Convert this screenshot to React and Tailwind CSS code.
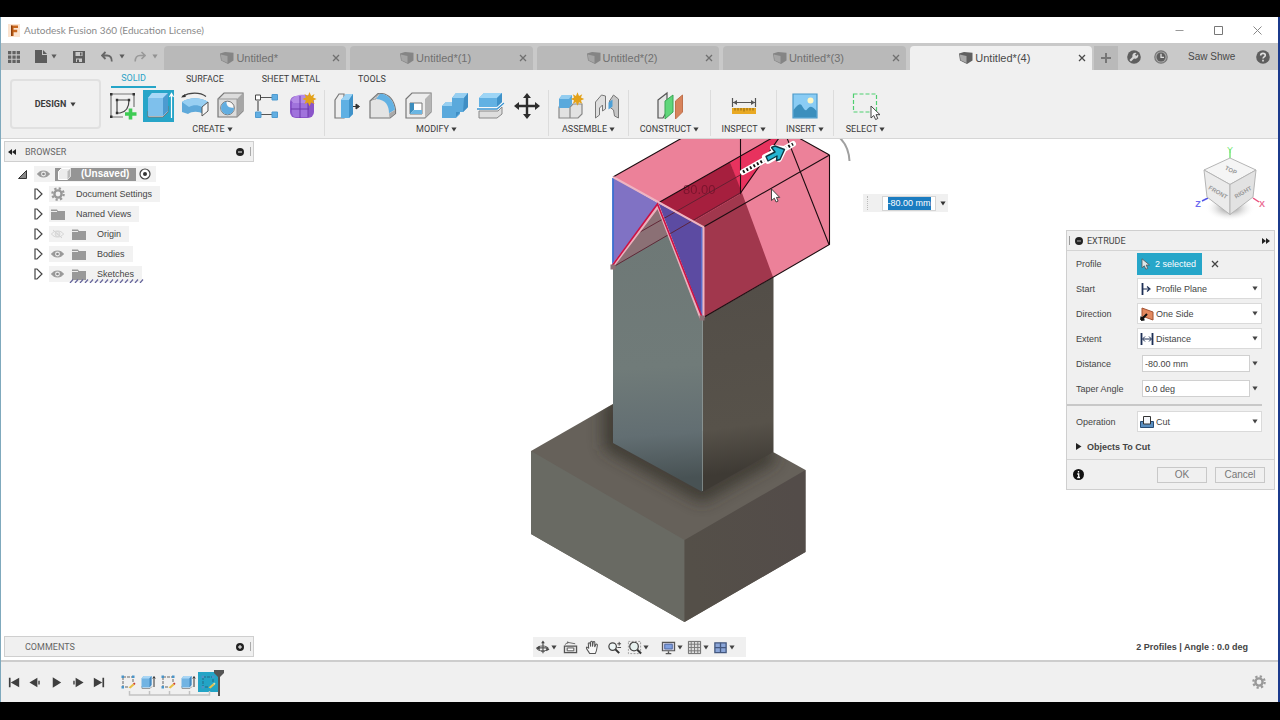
import { useState } from "react";

const TABS = ["Untitled*", "Untitled*(1)", "Untitled*(2)", "Untitled*(3)", "Untitled*(4)"];

function Caret({ className = "" }) {
    return (
        <svg className={`w-[6px] h-[5px] shrink-0 ${className}`} viewBox="0 0 6 5" fill="currentColor">
            <path d="M0.400 0.500h5.200L3 4.600z" />
        </svg>
    );
}

function Icon({ size = "w-4 h-4", box = "0 0 16 16", children }) {
    return (
        <svg className={`${size} shrink-0`} viewBox={box} fill="none">
            {children}
        </svg>
    );
}

function CloseX({ className = "w-[8px] h-[8px]" }) {
    return (
        <svg className={className} viewBox="0 0 8 8" stroke="currentColor" strokeWidth="1.3">
            <path d="M1 1l6 6M7 1L1 7" />
        </svg>
    );
}

/* ---------- title bar ---------- */

function TitleBar() {
    return (
        <header className="flex h-[26px] shrink-0 items-center bg-white pl-[7px] text-[#8a8a8a]">
            <Icon size="w-[12px] h-[13px]" box="0 0 12 13">
                <path d="M0 0h12v13H0z" fill="#fbe3cf" />
                <path d="M3 1.5h7v2.6H5.6v1.6h3.6v2.5H5.6V12H3z" fill="#c8661c" />
                <path d="M3 1.5h1.4V12H3z" fill="#8a3d0c" />
            </Icon>
            <h1 className="ml-[4px] flex-1 text-[10px] font-['Lato','Open_Sans',sans-serif]">Autodesk Fusion 360 (Education License)</h1>
            <div className="flex items-center pr-[1px]">
                <button aria-label="Minimize" className="flex w-[39px] justify-center">
                    <Icon size="w-[9px] h-[9px]" box="0 0 9 9"><path d="M0.500 4.500h8" stroke="#999" /></Icon>
                </button>
                <button aria-label="Maximize" className="flex w-[39px] justify-center">
                    <Icon size="w-[9px] h-[9px]" box="0 0 9 9"><path d="M0.500 0.500h8v8h-8z" stroke="#777" /></Icon>
                </button>
                <button aria-label="Close" className="flex w-[39px] justify-center">
                    <Icon size="w-[9px] h-[9px]" box="0 0 9 9"><path d="M0.500 0.500l8 8M8.500 0.500l-8 8" stroke="#888" /></Icon>
                </button>
            </div>
        </header>
    );
}

/* ---------- document tabs ---------- */

function CubeMark({ active }) {
    return (
        <Icon size="w-[14px] h-[12px]" box="0 0 14 12">
            <path d="M0 1.500L5 0l8.500 0.800V8.500L8 12 1 8.500z" fill={active ? "#606060" : "#858585"} />
            <path d="M0.800 2.500L7.500 4V11L1.600 8.200z" fill={active ? "#a9a9a9" : "#a5a5a5"} />
        </Icon>
    );
}

function TabBar({ active, onSelect }) {
    return (
        <div className="flex h-[27px] shrink-0 bg-[#c9c9c9] text-[#5c5c5c]">
            <div className="flex w-[163px] shrink-0 items-center pl-[7px]">
                <button aria-label="Data panel">
                    <Icon size="w-[12px] h-[12px]" box="0 0 12 12">
                        <path d="M0 0h3.300v3.300H0zM4.400 0h3.300v3.300H4.400zM8.700 0H12v3.300H8.700zM0 4.400h3.300v3.300H0zM4.400 4.400h3.300v3.300H4.400zM8.700 4.400H12v3.300H8.700zM0 8.700h3.300V12H0zM4.400 8.700h3.300V12H4.400zM8.700 8.700H12V12H8.700z" fill="#626262" />
                    </Icon>
                </button>
                <button aria-label="File" className="ml-[15px] flex items-center">
                    <Icon size="w-[12px] h-[13px]" box="0 0 12 13">
                        <path d="M0 0h7v5h5v8H0z" fill="#5c5c5c" />
                        <path d="M8 0l4 4H8z" fill="#5c5c5c" />
                    </Icon>
                    <Caret className="ml-[4px]" />
                </button>
                <button aria-label="Save" className="ml-[16px]">
                    <Icon size="w-[12px] h-[12px]" box="0 0 12 12">
                        <path d="M0 0h12v12H0z" fill="#5c5c5c" />
                        <path d="M2.500 1h7v4h-7zM3 7.500h6V11H3z" fill="#c9c9c9" />
                        <path d="M7 1.500h1.500v3H7zM4 8.500h2V11H4z" fill="#5c5c5c" />
                    </Icon>
                </button>
                <button aria-label="Undo" className="ml-[16px] flex items-center">
                    <Icon size="w-[12px] h-[11px]" box="0 0 12 11">
                        <path d="M4.500 1L1 4.500 4.500 8M1 4.500h5c3 0 4.800 2 4.800 6" stroke="#666" strokeWidth="1.800" />
                    </Icon>
                    <Caret className="ml-[6px]" />
                </button>
                <button aria-label="Redo" className="ml-[9px] flex items-center text-[#929292]">
                    <Icon size="w-[12px] h-[11px]" box="0 0 12 11">
                        <path d="M7.500 1L11 4.500 7.500 8M11 4.500H6c-3 0-4.800 2-4.800 6" stroke="#999" strokeWidth="1.600" />
                    </Icon>
                    <Caret className="ml-[6px]" />
                </button>
            </div>
            <div className="flex min-w-0 flex-1 gap-1 pt-[3px]">
                {TABS.map((name, i) => (
                    <div
                        key={name}
                        className={`flex flex-1 items-center rounded-t-sm ${i === active ? "bg-[#f0f0f0] text-[#4a4a4a]" : "bg-[#b9b9b9] text-[#707070]"}`}
                    >
                        <button className="flex flex-1 items-center justify-center gap-[2px] pl-1 text-[11px]" onClick={() => onSelect(i)}>
                            <CubeMark active={i === active} />
                            {name}
                        </button>
                        <button aria-label={`Close ${name}`} className="mr-[4px] flex w-[12px] justify-center">
                            <CloseX />
                        </button>
                    </div>
                ))}
            </div>
            <div className="flex w-[186px] shrink-0 items-center">
                <button aria-label="New design" className="mt-[3px] ml-[2px] flex h-[24px] w-[24px] items-center justify-center bg-[#b9b9b9]">
                    <Icon size="w-[12px] h-[12px]" box="0 0 12 12"><path d="M6 1v10M1 6h10" stroke="#777" strokeWidth="2" /></Icon>
                </button>
                <button aria-label="Extensions" className="ml-[9px]">
                    <Icon size="w-[14px] h-[14px]" box="0 0 14 14">
                        <circle cx="7" cy="7" r="6.800" fill="#5e5e5e" />
                        <path d="M3.200 10.800L7.500 6.500" stroke="#d5d5d5" strokeWidth="2.200" />
                        <path d="M11 4.300L9.300 6 8 4.700 9.700 3A3 3 0 1 0 11 4.300z" fill="#d5d5d5" />
                    </Icon>
                </button>
                <button aria-label="Job status" className="ml-[13px]">
                    <Icon size="w-[14px] h-[14px]" box="0 0 14 14">
                        <circle cx="7" cy="7" r="6.200" fill="#aaa" stroke="#777" strokeWidth="1.200" />
                        <circle cx="7" cy="7" r="4.500" fill="#5e5e5e" />
                        <path d="M7 3.800V7.300h3" stroke="#ddd" strokeWidth="1.300" />
                    </Icon>
                </button>
                <button className="ml-[20px] text-[10px] text-[#4a4a4a]">Saw Shwe</button>
                <button aria-label="Help" className="ml-auto mr-[8px]">
                    <Icon size="w-[14px] h-[14px]" box="0 0 14 14">
                        <circle cx="7" cy="7" r="6.800" fill="#5e5e5e" />
                        <path d="M4.700 5.400C4.700 2.600 9.300 2.700 9.300 5.300 9.300 6.900 7 6.900 7 8.600M7 9.700v1.800" stroke="#e0e0e0" strokeWidth="1.600" />
                    </Icon>
                </button>
            </div>
        </div>
    );
}

/* ---------- toolbar icons, all on a 30px board ---------- */

const Star = () => (
    <path d="M0-7.500L1.700-3.200 5.300-5.300 3.800-1.600 7.500 0 3.800 1.700 5.300 5.300 1.700 3.600 0 7.500-1.700 3.600-5.300 5.300-3.800 1.700-7.500 0-3.800-1.600-5.300-5.300-1.700-3.200z" fill="#e3a21a" />
);

const ART = {
    "Create Sketch": (
        <>
            <path d="M3 3h23v13M3 3v23h12" stroke="#777" strokeWidth="1.200" />
            <path d="M9 9v13h3c6-1 9-5 9-13zM9 9h12" stroke="#444" strokeWidth="1.200" />
            <path d="M2 2h2.500v2.500H2zM24.500 2H27v2.500h-2.500zM2 24.500h2.500V27H2zM7.800 7.800h2.400v2.400H7.800zM19.800 7.800h2.400v2.400h-2.400zM7.800 20.800h2.400v2.400H7.800z" fill="#333" />
            <path d="M22.500 17.500v11M17 23h11.500" stroke="#3ecb54" strokeWidth="3.600" />
        </>
    ),
    Extrude: (
        <>
            <path d="M4 20v6h15l5-5v-6z" fill="#f2f2f2" stroke="#777" />
            <path d="M4 7l4-5h16v18l-5 5H4z" fill="#7ec0ec" />
            <path d="M4 7l4-5h16l-5 5z" fill="#a8d8f7" />
            <path d="M19 7l5-5v18l-5 5z" fill="#4c9bd0" />
            <path d="M27.500 27V3M25.500 6l2-3.500 2 3.500" stroke="#fff" strokeWidth="1.200" />
        </>
    ),
    Revolve: (
        <>
            <path d="M2 5.500C10 1 20 1 26 5.500" stroke="#444" strokeWidth="1.200" />
            <path d="M1 6.500l4-3.500.8 3z" fill="#333" />
            <path d="M2 11C9 6 21 6 28 11l-5 12c-4-3-11-3-15 0L2 21z" fill="#5fa9da" />
            <path d="M2 11C9 6 21 6 28 11l-6 5c-4-2.500-9-2.500-13 0z" fill="#98cff2" />
            <path d="M22 16l6-5v9l-6 5z" fill="#f6f6f6" stroke="#555" />
        </>
    ),
    Hole: (
        <>
            <path d="M2 8l6-6h19v18l-6 6H2z" fill="#dcdcdc" stroke="#777" strokeWidth="1.200" />
            <path d="M21 8l6-6v18l-6 6z" fill="#a6a6a6" />
            <path d="M2 8h19v18" stroke="#999" />
            <circle cx="11.500" cy="17" r="6.800" fill="#f8f8f8" stroke="#777" />
            <path d="M10.500 10.500a6.500 6.500 0 1 0 7.500 6c-5 1-8-2-7.500-6z" fill="#61ade0" />
        </>
    ),
    Pattern: (
        <>
            <path d="M9 6.500h11M6 10v10M9 23.500h11" stroke="#555" strokeWidth="1.200" />
            <path d="M3.500 4h5v5h-5z" fill="#fff" stroke="#444" />
            <path d="M20 3.500h5.500V9H20zM3.500 21H9v5.500H3.500zM20 21h5.500v5.500H20z" fill="#62aee2" stroke="#4f9bd0" />
        </>
    ),
    "Create Form": (
        <>
            <rect x="2" y="5" width="24" height="22" rx="6" fill="#8a55c9" />
            <path d="M3 9c3-5 9-6 16-5 4 0 6 2 6 5l-4 3H5z" fill="#b48be6" />
            <path d="M4 12h16v14H7c-2 0-3-3-3-5z" fill="#a073dc" />
            <path d="M12 5v22M3 18h18M20 11v15" stroke="#6c3bab" />
            <g transform="translate(21.500 8) scale(.95)"><Star /></g>
        </>
    ),
    "Press Pull": (
        <>
            <path d="M3 9l4-6h5v24H3z" fill="#eee" stroke="#777" strokeWidth="1.200" />
            <path d="M9 9l5-6h7v20l-4 4H9z" fill="#5fb0e3" />
            <path d="M9 9l5-6h7l-4 6z" fill="#9ad2f4" />
            <path d="M17 9l4-6v20l-4 4z" fill="#3f92c9" />
            <path d="M21 15.500h4M24 13l3.500 2.500L24 18z" stroke="#333" fill="#333" />
        </>
    ),
    Fillet: (
        <>
            <path d="M2 10l8-7.500h4c7 1 12 7 13.500 16v4L22 27H2z" fill="#e4e4e4" stroke="#777" strokeWidth="1.200" />
            <path d="M12 2.800c8 0 14 7 15 16l-6 3.500C21 15 18 8.500 8 8z" fill="#62b1e3" />
            <path d="M12 2.800C8.500 5 8 6 8 8c-3 0-4 1-5.500 2" stroke="#999" />
            <path d="M21 22.500l6-3.500v3.500L21.500 27z" fill="#aaa" />
        </>
    ),
    Shell: (
        <>
            <path d="M2 8l6-6h19v19l-6 6H2z" fill="#ededed" stroke="#777" strokeWidth="1.200" />
            <path d="M21 8l6-6v19l-6 6z" fill="#b5b5b5" />
            <path d="M6 12h12v11H6z" fill="#fff" stroke="#777" />
            <path d="M6 12h4v7l-4 4z" fill="#3c8dbd" />
            <path d="M6 23l4-4h8v4z" fill="#6bb6e3" />
        </>
    ),
    Combine: (
        <>
            <path d="M2 15l4-4h6V7l4-5h12v14l-5 5h-3v2l-4 4H2z" fill="#5aa9dc" />
            <path d="M12 7l4-5h12l-4 5zM2 15l4-4h6v4z" fill="#97cff1" />
            <path d="M24 7l4-5v14l-5 5zM16 21h4l-4 5z" fill="#3f8ec4" />
        </>
    ),
    Split: (
        <>
            <path d="M3 7l5-5h18v9l-5 5H3z" fill="#62b1e3" />
            <path d="M3 7l5-5h18l-5 5z" fill="#9dd5f6" />
            <path d="M21 7l5-5v9l-5 5z" fill="#3f92c9" />
            <path d="M3 20h19l4-4v7l-5 4H3z" fill="#dedede" stroke="#888" />
            <path d="M1 17.800h20l7-6" stroke="#fff" strokeWidth="2.600" />
            <path d="M1 18h20l7-6" stroke="#3a93cf" strokeWidth="1.300" />
        </>
    ),
    Move: (
        <path d="M15 2l4 5h-2.800v6.800H23V11l5 4-5 4v-2.800h-6.800V23H19l-4 5-4-5h2.800v-6.800H7V19l-5-4 5-4v2.800h6.800V7H11z" fill="#2d2d2d" />
    ),
    "New Component": (
        <>
            <path d="M3 16h11v11H3zM14 16l3-3h9v10l-4 4h-8z" fill="#e2e2e2" stroke="#888" strokeWidth="1.200" />
            <path d="M3 8l3-4h10v9l-3 4H3z" fill="#5aa9dc" />
            <path d="M3 8l3-4h10l-3 4z" fill="#93cdf0" />
            <g transform="translate(21.500 8) scale(.9)"><Star /></g>
        </>
    ),
    Joint: (
        <>
            <path d="M3.500 11l6-7 4 1v13l-3 2v-6l-3 3v7l-4 3z" fill="#dedede" stroke="#777" />
            <path d="M26.500 8l-5-4-4 6v6l4 3 1 6 4 2z" fill="#c6c6c6" stroke="#777" />
            <path d="M16.500 11.500l4-3v7l-4 3z" fill="#4d9fd6" />
        </>
    ),
    "Offset Plane": (
        <>
            <path d="M3 9l9-7v18L8 27H3z" fill="#e6e6e6" stroke="#555" strokeWidth="1.200" />
            <path d="M10 10l8-6v17l-8 7z" fill="#5fd67a" stroke="#3aa655" />
            <path d="M20.500 10l7-6v17l-7 7z" fill="#d8835b" stroke="#c0714c" />
        </>
    ),
    Measure: (
        <>
            <path d="M3.500 7v9M26.500 7v9M4 11.500h22" stroke="#555" strokeWidth="1.200" />
            <path d="M4 11.500l4-2.500v5zM26 11.500l-4-2.500v5z" fill="#555" />
            <path d="M3 17h24v6H3z" fill="#e9a923" />
            <path d="M6 17v2.500M9 17v2.500M12 17v2.500M15 17v3.500M18 17v2.500M21 17v2.500M24 17v2.500" stroke="#8b6410" />
        </>
    ),
    "Insert Image": (
        <>
            <path d="M3 3h24v24H3z" fill="#8accf4" stroke="#4b99c9" strokeWidth="1.200" />
            <path d="M3.500 19c4-5 6-7 8-5 2 3 3 6 5 5 3-4 5-5 10 1v6.500h-23z" fill="#3c8fbd" />
            <circle cx="20.500" cy="9.500" r="3" fill="#fff7c4" />
        </>
    ),
    Select: (
        <>
            <path d="M2.500 3h23v18h-23z" stroke="#4fcf70" strokeWidth="1.200" strokeDasharray="4 2" />
            <path d="M20 15v12l2.800-2.500 1.800 4 2.200-1-1.800-3.800H29z" fill="#fff" stroke="#444" />
        </>
    ),
};

const GROUPS = [
    { label: "CREATE", width: "w-[224px]", tools: ["Create Sketch", "Extrude", "Revolve", "Hole", "Pattern", "Create Form"] },
    { label: "MODIFY", width: "w-[224px]", tools: ["Press Pull", "Fillet", "Shell", "Combine", "Split", "Move"] },
    { label: "ASSEMBLE", width: "w-[80px]", tools: ["New Component", "Joint"] },
    { label: "CONSTRUCT", width: "w-[82px]", tools: ["Offset Plane"] },
    { label: "INSPECT", width: "w-[66px]", tools: ["Measure"] },
    { label: "INSERT", width: "w-[57px]", tools: ["Insert Image"] },
    { label: "SELECT", width: "w-[64px] border-transparent", tools: ["Select"] },
];

function Toolbar() {
    return (
        <div className="flex h-[69px] shrink-0 border-b border-[#d6d6d6] bg-[#f0f0f0] font-[Roboto,sans-serif] text-[9px] leading-[14px] text-[#3c3c3c]">
            <button className="mt-[9px] ml-[9px] flex h-[50px] w-[91px] items-center justify-center gap-[4px] rounded-sm border-2 border-[#e0e0e0] font-bold">
                DESIGN <Caret />
            </button>
            <div className="flex flex-col">
                <nav className="flex h-[18px] items-stretch leading-[16px]">
                    <button className="mr-[30px] ml-[10px] w-[45px] border-b-2 border-[#25a5c8] text-[#2aa3c6]">SOLID</button>
                    <button className="mr-[38px]">SURFACE</button>
                    <button className="mr-[38px]">SHEET METAL</button>
                    <button>TOOLS</button>
                </nav>
                <div className="flex pt-[2px]">
                    {GROUPS.map((g) => (
                        <section key={g.label} className={`flex flex-col items-center border-r border-[#dcdcdc] ${g.width}`}>
                            <div className="flex">
                                {g.tools.map((t) => (
                                    <button key={t} aria-label={t} className="flex h-[32px] w-[36px] items-center justify-center">
                                        <span className={`flex h-[32px] w-[31px] items-center justify-center ${t === "Extrude" ? "bg-[#27a5c8]" : ""}`}>
                                            <Icon size="w-[30px] h-[30px]" box="0 0 30 30">{ART[t]}</Icon>
                                        </span>
                                    </button>
                                ))}
                            </div>
                            <button className="flex h-[14px] items-center gap-[2px]">{g.label}<Caret /></button>
                        </section>
                    ))}
                </div>
            </div>
        </div>
    );
}

/* ---------- browser tree ---------- */

function Eye({ off }) {
    return (
        <Icon size="w-[13px] h-[10px]" box="0 0 13 10">
            <path d="M0.500 5C3 1 10 1 12.500 5 10 9 3 9 0.500 5z" fill={off ? "none" : "#999"} stroke={off ? "#d3d3d3" : "#999"} />
            <circle cx="6.500" cy="5" r="2.400" fill={off ? "none" : "#f0f0f0"} stroke={off ? "#d3d3d3" : "none"} />
            <circle cx="6.500" cy="5" r="1.300" fill={off ? "#ddd" : "#888"} />
            {off && <path d="M2 1l9 8" stroke="#d3d3d3" />}
        </Icon>
    );
}

function Folder() {
    return (
        <Icon size="w-[14px] h-[11px]" box="0 0 14 11">
            <path d="M0 0.500h6l1 1.500h7v9H0z" fill="#999" />
            <path d="M0 2.500h6" stroke="#eee" />
        </Icon>
    );
}

function Gear({ size = "w-[14px] h-[14px]" }) {
    return (
        <Icon size={size} box="0 0 14 14">
            <circle cx="7" cy="7" r="3.600" stroke="#999" strokeWidth="2.400" />
            <circle cx="7" cy="7" r="5.700" stroke="#999" strokeWidth="2.200" strokeDasharray="2.240 2.240" />
        </Icon>
    );
}

function PanelHeader({ title, collapse, plus }) {
    return (
        <div className="flex h-[21px] items-center border border-[#cfcfcf] bg-[#f0f0f0] font-[Roboto,sans-serif] text-[9px] leading-[14px] text-[#666]">
            <span className="flex w-[20px] pl-[3px]">
                {collapse && <Icon size="w-[8px] h-[6px]" box="0 0 8 6"><path d="M4 0v6L0 3zM8 0v6L4 3z" fill="#222" /></Icon>}
            </span>
            <h2 className="flex-1">{title}</h2>
            <button aria-label={`Toggle ${title}`}>
                <Icon size="w-[8px] h-[8px]" box="0 0 8 8">
                    <circle cx="4" cy="4" r="4" fill="#222" />
                    <path d={plus ? "M2 4h4M4 2v4" : "M2 4h4"} stroke="#fff" />
                </Icon>
            </button>
            <span className="ml-[6px] h-[9px] w-[3px] border-l border-[#aaa]" />
        </div>
    );
}

const NODES = [
    { name: "Document Settings", icon: "gear" },
    { name: "Named Views", icon: "folder" },
    { name: "Origin", icon: "folder", eye: "off" },
    { name: "Bodies", icon: "folder", eye: "on" },
    { name: "Sketches", icon: "folder", eye: "on", hatched: true },
];

function Browser() {
    return (
        <section>
            <PanelHeader title="BROWSER" collapse />
            <ul className="pt-[2px] text-[9px] leading-[14px] text-[#444]">
                <li className="flex h-[20px] items-center pl-[14px]">
                    <Icon size="w-[9px] h-[9px]" box="0 0 9 9"><path d="M8.500 0.500v8h-8z" fill="#888" stroke="#333" /></Icon>
                    <div className="ml-[7px] flex h-[16px] items-center bg-[#f2f2f2] pr-[5px] pl-[3px]">
                        <Eye />
                        <span className="mr-[3px] ml-[5px] flex h-[13px] w-[81px] items-center bg-[#959595] pl-[3px] text-[10px] font-bold text-white">
                            <Icon size="w-[13px] h-[12px]" box="0 0 13 12">
                                <path d="M0.500 3.500l3-3h9v8l-3 3h-9z" fill="#ececec" stroke="#fff" />
                                <path d="M9.500 3.500l3-3v8l-3 3z" fill="#bbb" />
                            </Icon>
                            <span className="ml-[10px]">(Unsaved)</span>
                        </span>
                        <Icon size="w-[12px] h-[12px]" box="0 0 12 12">
                            <circle cx="6" cy="6" r="5" fill="#fff" stroke="#444" strokeWidth="1.200" />
                            <circle cx="6" cy="6" r="2" fill="#333" />
                        </Icon>
                    </div>
                </li>
                {NODES.map((n) => (
                    <li key={n.name} className="flex h-[20px] items-center pl-[30px]">
                        <Icon size="w-[9px] h-[12px]" box="0 0 9 12"><path d="M1 1h2l5 5-5 5H1z" fill="#fff" stroke="#444" strokeWidth="1.200" /></Icon>
                        <div className="relative ml-[6px] flex h-[16px] items-center bg-[#f2f2f2] pr-[8px] pl-[2px]">
                            {n.eye && <span className="mr-[8px] flex"><Eye off={n.eye === "off"} /></span>}
                            <span className="flex w-[14px] justify-center">{n.icon === "gear" ? <Gear /> : <Folder />}</span>
                            <span className="ml-[11px]">{n.name}</span>
                            {n.hatched && (
                                <svg className="absolute bottom-[-1px] left-[20px] h-[4px] w-[75px]" viewBox="0 0 75 4">
                                    <path d="M1 4l3-3.500M6 4l3-3.500M11 4l3-3.500M16 4l3-3.500M21 4l3-3.500M26 4l3-3.500M31 4l3-3.500M36 4l3-3.500M41 4l3-3.500M46 4l3-3.500M51 4l3-3.500M56 4l3-3.500M61 4l3-3.500M66 4l3-3.500M71 4l3-3.500" stroke="#66669c" strokeWidth="1.200" />
                                </svg>
                            )}
                        </div>
                    </li>
                ))}
            </ul>
        </section>
    );
}

/* ---------- model ---------- */

function Model() {
    return (
        <svg className="absolute inset-0 h-full w-full" viewBox="1 139 1277 521" fill="none">
            <defs>
                <linearGradient id="colLeft" x1="640" y1="230" x2="656" y2="480" gradientUnits="userSpaceOnUse">
                    <stop offset="0" stopColor="#6e7876" />
                    <stop offset=".55" stopColor="#707b79" />
                    <stop offset=".82" stopColor="#626e72" />
                    <stop offset="1" stopColor="#485254" />
                </linearGradient>
                <linearGradient id="colRight" x1="728" y1="290" x2="752" y2="470" gradientUnits="userSpaceOnUse">
                    <stop offset="0" stopColor="#534e48" />
                    <stop offset=".75" stopColor="#57524a" />
                    <stop offset="1" stopColor="#3e3a34" />
                </linearGradient>
                <linearGradient id="baseRight" x1="690" y1="560" x2="805" y2="540" gradientUnits="userSpaceOnUse">
                    <stop offset="0" stopColor="#544f48" />
                    <stop offset="1" stopColor="#534c49" />
                </linearGradient>
                <clipPath id="plinthTop">
                    <path d="M531 451L613 404 773 452 805.500 470 684.500 540z" />
                </clipPath>
                <filter id="soft" x="-30%" y="-30%" width="160%" height="160%">
                    <feGaussianBlur stdDeviation="8" />
                </filter>
            </defs>

            {/* plinth */}
            <path d="M531 451L613 404 773 452 805.500 470V552L684.500 622 531 534z" fill="#66615a" />
            <g clipPath="url(#plinthTop)">
                <path d="M613 398V443L702 492 773 452" stroke="#35312b" strokeWidth="18" opacity=".85" filter="url(#soft)" />
            </g>
            <path d="M531 451L684.500 540V622L531 534z" fill="#696a63" />
            <path d="M684.500 540L805.500 470V552L684.500 622z" fill="url(#baseRight)" />

            {/* column */}
            <path d="M613 267L658 205 702.500 318V492L613 443z" fill="url(#colLeft)" />
            <path d="M702.500 318L773.500 277V452L702.500 492z" fill="url(#colRight)" />
            <path d="M702.500 318V491" stroke="#8a9696" strokeWidth=".8" />

            {/* cut volume */}
            <path d="M613 177L682 138H799L829.500 155V244.500L702.500 318 703.500 227z" fill="#ec8199" />
            <path d="M730 162L772 138H779L741 193z" fill="#e8325e" />
            <path d="M658 203L730 162 742 193 694 221z" fill="#a61f3e" />
            <path d="M694 221L742 193 773 277 702.500 318 703.500 227z" fill="#a1374d" />
            <path d="M658 205L613 267 669 234z" fill="#8b7075" />
            <path d="M613 177L658 203 613 267z" fill="#8072c4" />
            <path d="M658 203L703.500 227 702.500 318z" fill="#5c4ba2" />
            <text x="683" y="194" fontSize="13" fill="#6d1028" opacity=".75">80.00</text>

            <g stroke="#1c0c10" strokeWidth="1.100">
                <path d="M613 177L682 138M658 203L772 138M703.500 227L829.500 155M829.500 155V244.500L702.500 318M799 138L829.500 155M740.500 138V193L779 138M787 138L829 244.500" />
                <path d="M613 267L740 193M640 232L742 174" stroke="#5c1f30" strokeWidth=".9" />
            </g>
            <path d="M613 178V266" stroke="#3a6fd0" strokeWidth="1.800" />
            <path d="M702 228V317" stroke="#5a78d8" strokeWidth="1.500" />
            <path d="M613 177L703.500 227V318" stroke="#eeb4c2" strokeWidth="2" />
            <path d="M612 267L658 206 701 318" stroke="#eab0bc" strokeWidth="3" />
            <path d="M612 266L657.500 204 702 317" stroke="#cc1145" strokeWidth="1.600" />
            <path d="M610.500 264.500h5v5h-5zM699.500 315.500h5v5h-5z" fill="#8c7076" />

            {/* drag handle */}
            <path d="M743 172L793 144" stroke="#fff" strokeWidth="6" strokeLinecap="round" />
            <path d="M743 172L793 144" stroke="#111" strokeWidth="3" strokeDasharray="1.800 2.200" />
            <path d="M765 157L775 152 773 148 784 149 779 159 777 156 768 161z" stroke="#fff" strokeWidth="6" strokeLinejoin="round" />
            <path d="M766 156.500L775 152 771.500 147.500 775 146 784.500 149.500 780 159.500 776.500 160.500 777 156 768 161z" fill="#26b6d3" stroke="#0d3742" strokeWidth="1.400" strokeLinejoin="round" />
            <path d="M840 138C846 144 849 151 849.500 161" stroke="#a0a0a0" strokeWidth="2" />
            <path d="M771.500 189v11.500l2.800-2.300 1.800 3.800 2-.9-1.700-3.700h3.300z" fill="#fff" stroke="#333" strokeWidth=".9" />
        </svg>
    );
}

function ViewCube() {
    return (
        <svg className="h-[82px] w-[76px]" viewBox="1192 143 76 82" fill="none">
            <defs>
                <radialGradient id="cubeShade">
                    <stop offset="0" stopColor="#777" />
                    <stop offset="1" stopColor="#fff" stopOpacity="0" />
                </radialGradient>
            </defs>
            <ellipse cx="1230" cy="208" rx="25" ry="13" fill="url(#cubeShade)" />
            <path d="M1230 158V149" stroke="#7be87b" strokeWidth="1.500" />
            <path d="M1208 198l-6 3" stroke="#5353e8" strokeWidth="1.500" />
            <path d="M1253 198l6 4" stroke="#e8507e" strokeWidth="1.500" />
            <path d="M1230 158L1256 170 1230 184.500 1204 170z" fill="#f5f5f5" stroke="#b5b5b5" />
            <path d="M1204 170L1230 184.500V214.500L1207 197z" fill="#ebebeb" stroke="#b5b5b5" />
            <path d="M1256 170L1230 184.500V214.500L1253 197z" fill="#e2e2e2" stroke="#b5b5b5" />
            <g fontSize="6" fill="#999" fontWeight="bold" textAnchor="middle">
                <text transform="translate(1230 172) rotate(26)">TOP</text>
                <text transform="translate(1217 194) rotate(30)">FRONT</text>
                <text transform="translate(1244 194) rotate(-30)">RIGHT</text>
            </g>
            <g fontSize="9" textAnchor="middle">
                <text x="1230" y="153" fill="#7be87b">Y</text>
                <text x="1198" y="207" fill="#6b6bf0" fontWeight="bold">Z</text>
                <text x="1262" y="207" fill="#ec6f95" fontWeight="bold">X</text>
            </g>
        </svg>
    );
}

/* ---------- extrude dialog ---------- */

const FIELD_ICONS = {
    start: (
        <>
            <path d="M3.500 2v12" stroke="#1d2f55" strokeWidth="1.800" />
            <path d="M4 8h6M8 5.500L11 8l-3 2.500" stroke="#1d2f55" strokeWidth="1.200" />
        </>
    ),
    direction: (
        <>
            <path d="M3 2l11 4v8l-11-4z" fill="#e2895f" stroke="#a35232" />
            <path d="M2 14l6-6M2 14l3.500-.5M2 14l.5-3.500" stroke="#111" strokeWidth="2" />
        </>
    ),
    extent: (
        <>
            <path d="M2.500 2v12M13.500 2v12" stroke="#1d2f55" strokeWidth="1.800" />
            <path d="M4 8h8M6 5.500L3.500 8 6 10.500M10 5.500L12.500 8 10 10.500" stroke="#1d2f55" />
        </>
    ),
    operation: (
        <>
            <path d="M1.500 7.500h13v6h-13z" fill="#5b8fc0" stroke="#274b73" />
            <path d="M4.500 2.500h7v7.500h-7z" fill="#f4f6fa" stroke="#333" />
        </>
    ),
};

function SelectRow({ id, label, value }) {
    return (
        <div className="flex h-[25px] items-center">
            <label htmlFor={id} className="w-[61px] shrink-0">{label}</label>
            <div className="flex h-[21px] flex-1 items-center border border-[#dadada] bg-white pl-[1px]">
                <Icon>{FIELD_ICONS[id]}</Icon>
                <select id={id} defaultValue={value} className="h-full min-w-0 flex-1 appearance-none bg-transparent pl-px outline-none">
                    <option>{value}</option>
                </select>
                <Caret className="mr-[3px]" />
            </div>
        </div>
    );
}

function InputRow({ id, label, value }) {
    return (
        <div className="flex h-[25px] items-center">
            <label htmlFor={id} className="w-[66px] shrink-0">{label}</label>
            <input id={id} defaultValue={value} className="h-[17px] min-w-0 flex-1 border border-[#d0d0d0] bg-white px-[2px] outline-none" />
            <Caret className="mr-[4px] ml-[2px]" />
        </div>
    );
}

function ExtrudePanel() {
    return (
        <form className="w-[209px] border border-[#cfcfcf] bg-[#f0f0f0] text-[9px] leading-[14px] text-[#444]" onSubmit={(e) => e.preventDefault()}>
            <div className="flex h-[20px] items-center border-b border-[#d4d4d4] font-[Roboto,sans-serif]">
                <span className="ml-[2px] h-[9px] border-l border-[#999]" />
                <button type="button" aria-label="Collapse" className="ml-[5px]">
                    <Icon size="w-[8px] h-[8px]" box="0 0 8 8">
                        <circle cx="4" cy="4" r="4" fill="#222" />
                        <path d="M2 4h4" stroke="#aaa" />
                    </Icon>
                </button>
                <h2 className="ml-[4px] flex-1">EXTRUDE</h2>
                <Icon size="w-[8px] h-[6px]" box="0 0 8 6"><path d="M0 0v6l4-3zM4 0v6l4-3z" fill="#222" /></Icon>
                <span className="w-[4px]" />
            </div>
            <div className="pr-[12px] pl-[9px]">
                <div className="flex h-[25px] items-center">
                    <span className="w-[61px]">Profile</span>
                    <button type="button" className="flex h-[22px] w-[65px] items-center bg-[#26a6c9] pl-[4px] text-white">
                        <Icon size="w-[10px] h-[12px]" box="0 0 10 12"><path d="M1 0.800v9l2.300-2 1.500 3.400 1.900-.8L5.200 7H8.500z" fill="#dfe8ea" stroke="#555" strokeWidth=".8" /></Icon>
                        <span className="ml-[4px]">2 selected</span>
                    </button>
                    <button type="button" aria-label="Clear profile" className="ml-[9px]"><CloseX /></button>
                </div>
                <SelectRow id="start" label="Start" value="Profile Plane" />
                <SelectRow id="direction" label="Direction" value="One Side" />
                <SelectRow id="extent" label="Extent" value="Distance" />
                <InputRow id="distance" label="Distance" value="-80.00 mm" />
                <InputRow id="taper" label="Taper Angle" value="0.0 deg" />
            </div>
            <hr className="mt-[3px] mr-[12px] mb-[3px] border-t-2 border-[#c8c8c8]" />
            <div className="pr-[12px] pl-[9px]">
                <SelectRow id="operation" label="Operation" value="Cut" />
                <button type="button" className="flex h-[25px] items-center font-bold">
                    <Icon size="w-[6px] h-[7px]" box="0 0 6 7"><path d="M0 0l5.500 3.500L0 7z" fill="#222" /></Icon>
                    <span className="ml-[5px]">Objects To Cut</span>
                </button>
            </div>
            <div className="flex h-[30px] items-center border-t border-[#d4d4d4] pr-[9px] pl-[6px] text-[10px] text-[#777]">
                <Icon size="w-[11px] h-[11px]" box="0 0 11 11">
                    <circle cx="5.500" cy="5.500" r="5.500" fill="#111" />
                    <path d="M5.500 2v1.600M4.300 5h1.400v3.500M4.200 8.500h2.800" stroke="#fff" strokeWidth="1.300" />
                </Icon>
                <button type="submit" className="ml-auto h-[16px] w-[50px] border border-[#c8c8c8]">OK</button>
                <button type="button" className="ml-[8px] h-[16px] w-[50px] border border-[#c8c8c8]">Cancel</button>
            </div>
        </form>
    );
}

/* ---------- navigation bar ---------- */

const NAV = [
    { name: "Orbit", caret: true, art: <><path d="M8.500 2v12M3 8.500h11M6.500 12h4" stroke="#555" strokeWidth="1.300" /><ellipse cx="8" cy="9" rx="6" ry="2.600" stroke="#555" /><path d="M1 8.500l4-2.500v5zM8.500 0.500l2 3h-4zM12 8l3.500 2-3.500 2z" fill="#444" /></> },
    { name: "Look At", art: <><path d="M1.500 6.500h13v7h-13z" fill="#ddd" stroke="#555" strokeWidth="1.300" /><path d="M4.500 8.500h7v3h-7z" fill="#fff" stroke="#555" /><path d="M2 5l3-2.500L13 4M5 1.500V4" stroke="#666" /></> },
    { name: "Pan", art: <path d="M5 14.500C4 12 1.500 10 1.500 8.500s1.500-1 2.500.5L3.500 4c0-1.500 1.500-1.500 2 0L6 7V2.500c0-1.500 1.700-1.500 2 0V7l.7-4.500c.3-1.200 1.800-1 1.800.3L10.300 7.500 11.500 5c.6-1.200 2-.6 1.700.6-.5 3-.7 6.400-2.200 8.900z" fill="#f8f8f8" stroke="#555" strokeWidth="1.100" /> },
    { name: "Zoom", art: <><circle cx="6" cy="7" r="4" fill="#eef6f6" stroke="#444" strokeWidth="1.300" /><path d="M9 10l4 4" stroke="#333" strokeWidth="2.200" /><path d="M11 4h4M13 2v4M11 8h4" stroke="#444" /></> },
    { name: "Fit", caret: true, art: <><path d="M1.500 1.500h13v13h-13z" stroke="#999" strokeDasharray="2 1.500" /><circle cx="7.500" cy="7" r="4.600" fill="#e6f1ef" stroke="#444" strokeWidth="1.300" /><path d="M11 10.500l4 4" stroke="#333" strokeWidth="2.200" /></> },
    { name: "Display Settings", caret: true, gap: true, art: <><path d="M1.500 2.500h13v9h-13z" fill="#ccd" stroke="#555" strokeWidth="1.200" /><path d="M4 4.500h8v5H4z" fill="#7f9fe0" stroke="#4d66a0" /><path d="M8 12v2M5 14.500h6" stroke="#555" strokeWidth="1.500" /></> },
    { name: "Grid", caret: true, art: <><path d="M1.500 1.500h13v13h-13z" fill="#ddd" stroke="#666" /><path d="M4.500 2v12M8 2v12M11.500 2v12M2 4.500h12M2 8h12M2 11.500h12" stroke="#777" /></> },
    { name: "Viewports", caret: true, art: <><path d="M2 3h12v10.500H2z" fill="#8aa5d8" stroke="#44587f" strokeWidth="1.400" /><path d="M8 3v10.500M2 8.200h12" stroke="#44587f" strokeWidth="1.400" /></> },
];

function NavBar() {
    return (
        <nav className="flex h-[20px] items-center bg-[#f0f0f0] pr-[9px] text-[#444]">
            {NAV.map((n) => (
                <button
                    key={n.name}
                    aria-label={n.name}
                    className={`flex items-center justify-center ${n.caret ? "w-[26px] gap-px" : "w-[22px]"} ${n.gap ? "ml-[8px]" : ""}`}
                >
                    <Icon size="w-[15px] h-[15px]">{n.art}</Icon>
                    {n.caret && <Caret />}
                </button>
            ))}
        </nav>
    );
}

/* ---------- timeline ---------- */

const PLAYBACK = [
    { name: "Go to start", d: "M2 3h1.800v10H2zM13 3v10L4 8z" },
    { name: "Step back", d: "M10 3v10L1.500 8zM11 6h1.500v4H11z" },
    { name: "Play", d: "M4 2.500v11L13 8z" },
    { name: "Step forward", d: "M6 3v10l8.500-5zM3.500 6H5v4H3.500z" },
    { name: "Go to end", d: "M12.200 3H14v10h-1.800zM3 3v10l9-5z" },
];

function FeatureArt({ kind }) {
    if (kind === "extrude") {
        return (
            <Icon>
                <path d="M2 12v2.500h8l2-2" fill="#f4f4f4" stroke="#999" />
                <path d="M1.500 4.500l2-2.500h8v9l-2 2.500h-8z" fill="#72b4e3" />
                <path d="M1.500 4.500l2-2.500h8l-2 2.500z" fill="#a9d6f5" />
                <path d="M9.500 4.500l2-2.500v9l-2 2.500z" fill="#4689c0" />
                <path d="M14 13V3M12.800 4.500L14 2.500l1.200 2" stroke="#333" />
            </Icon>
        );
    }
    return (
        <Icon>
            <path d="M3 3h10v6M3 3v10h6" stroke={kind === "active" ? "#256b86" : "#666"} strokeDasharray="3 1" />
            <path d="M1.500 1.500h2.500V4H1.500zM12 1.500h2.500V4H12zM1.500 12h2.500v2.500H1.500z" fill="#4a94c8" />
            <path d="M8.500 13.500l4.500-4 1.500 1.500-4 3.500z" fill="#e8c04a" />
            <path d="M13 9.500l1.300-1 1.200 1.200-1 1.300z" fill={kind === "active" ? "#e8e0a0" : "#cc3b2d"} />
        </Icon>
    );
}

function Timeline() {
    return (
        <footer className="flex h-[42px] shrink-0 items-center border-t-2 border-[#cdcdcd] bg-[#f0f0f0] pl-[3px]">
            {PLAYBACK.map((p) => (
                <button key={p.name} aria-label={p.name} className="flex w-[21px] justify-center">
                    <Icon size="w-[15px] h-[15px]"><path d={p.d} fill="#3f3f3f" /></Icon>
                </button>
            ))}
            <div className="relative ml-[9px] flex">
                {["sketch", "extrude", "sketch", "extrude", "active"].map((kind, i) => (
                    <button key={i} aria-label={`Feature ${i + 1}`} className={`flex h-[20px] w-[20px] items-center justify-center ${kind === "active" ? "bg-[#23a4c6]" : ""}`}>
                        <FeatureArt kind={kind} />
                    </button>
                ))}
                <svg className="absolute top-[-2px] left-0 h-[28px] w-[106px]" viewBox="0 0 106 28" fill="none">
                    <path d="M11.500 21v4h80v-4M31.500 21v4M51.500 21v4M71.500 21v4" stroke="#c2c2c2" strokeWidth="1.500" />
                    <path d="M96 0h10v3l-4 4v19h-2V7l-4-4z" fill="#555" />
                </svg>
            </div>
            <button aria-label="Settings" className="mr-[12px] ml-auto"><Gear /></button>
        </footer>
    );
}

export default function App() {
    const [active, setActive] = useState(4);

    return (
        <div className="flex h-screen flex-col bg-black pt-[17px] pb-[18px] font-['Liberation_Sans',Arial,sans-serif]">
            <div className="flex min-h-0 flex-1 flex-col border-r-2 border-l border-r-[#1b3a8c] border-l-[#7fa9bd] bg-white">
                <TitleBar />
                <TabBar active={active} onSelect={setActive} />
                <Toolbar />
                <main className="relative min-h-0 flex-1 overflow-hidden">
                    <Model />
                    <div className="absolute top-[55px] left-[862px] flex h-[18px] items-center bg-[#f0f0f0] text-[9px] leading-[13px]">
                        <span className="mr-[14px] ml-[4px] h-[14px] border-l border-dotted border-[#bbb]" />
                        <div className="flex h-[15px] w-[54px] items-center justify-center border border-[#d5d5d5] bg-white">
                            <input aria-label="Extrude distance" defaultValue="-80.00 mm" className="h-[13px] w-[43px] bg-[#1b7cc0] text-white outline-none" />
                        </div>
                        <Caret className="mr-[2px] ml-[4px] text-[#333]" />
                    </div>
                    <div className="relative grid h-full grid-cols-[1fr_auto_1fr]">
                        <div className="flex w-[253px] flex-col justify-between pt-[2px] pb-[3px] pl-[3px]">
                            <Browser />
                            <PanelHeader title="COMMENTS" plus />
                        </div>
                        <div className="self-end pb-[3px]"><NavBar /></div>
                        <div className="flex flex-col items-end pt-[4px] pr-[3px]">
                            <div className="mr-[7px] mb-[5px] flex"><ViewCube /></div>
                            <ExtrudePanel />
                            <p className="mt-auto mr-[27px] mb-[7px] text-[9px] leading-[12px] font-bold text-[#444]">2 Profiles | Angle : 0.0 deg</p>
                        </div>
                    </div>
                </main>
                <Timeline />
            </div>
        </div>
    );
}
